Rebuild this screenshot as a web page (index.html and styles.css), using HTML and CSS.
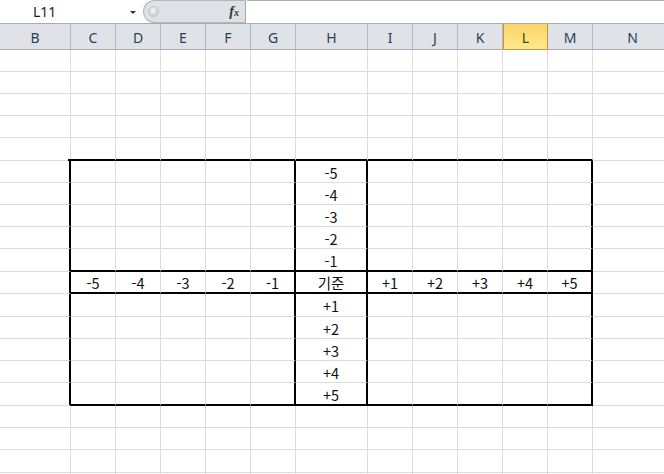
FILE: index.html
```html
<!DOCTYPE html>
<html lang="ko">
<head>
  <meta charset="UTF-8" />
  <meta name="viewport" content="width=device-width, initial-scale=1.0"/>
  <title>Sheet</title>
  <link rel="stylesheet" href="styles.css">
</head>
<body>

  <div class="formula-bar">
    <div class="name-box">
      <span class="cell-ref">L11</span>
      <span class="drop-arrow"></span>
    </div>
    <div class="fx-pill">
      <span class="knob"></span>
      <span class="fx">f<small>x</small></span>
    </div>
    <div class="formula-input"></div>
  </div>

  <div class="sheet" id="sheet"></div>

  <script>
    const cols = ['B','C','D','E','F','G','H','I','J','K','L','M','N'];
    const sheet = document.getElementById('sheet');

    // column headers
    cols.forEach(c => {
      const h = document.createElement('div');
      h.className = 'col-head' + (c === 'L' ? ' selected' : '');
      h.textContent = c;
      sheet.appendChild(h);
    });

    function cellText(r, c) {
      // r: 1-based data row, c: 0-based column (B = 0)
      if (c === 6 && r >= 6 && r <= 10) return String(r - 11);
      if (c === 6 && r === 11) return '기준';
      if (c === 6 && r >= 12 && r <= 16) return '+' + (r - 11);
      if (r === 11 && c >= 1 && c <= 5) return String(c - 6);
      if (r === 11 && c >= 7 && c <= 11) return '+' + (c - 6);
      return '';
    }

    for (let r = 1; r <= 20; r++) {
      for (let c = 0; c < cols.length; c++) {
        const cell = document.createElement('div');
        let cls = 'cell';
        const inTable = r >= 6 && r <= 16;
        if (inTable && (c === 0 || c === 5 || c === 6 || c === 11)) cls += ' thick-right';
        if ((r === 5 || r === 10 || r === 11 || r === 16) && c >= 1 && c <= 11) cls += ' thick-bottom';
        if (r === 5 && c === 0) cls += ' corner';
        cell.className = cls;
        cell.textContent = cellText(r, c);
        sheet.appendChild(cell);
      }
    }
  </script>

</body>
</html>
```

FILE: styles.css
```css
body {
  margin: 0;
  padding: 0;
  background: #fff;
  overflow: hidden;
  font-family: "Noto Sans", "Noto Sans CJK KR", sans-serif;
}

/* formula bar */

.formula-bar {
  display: flex;
  height: 23px;
  border-bottom: 1px solid #a8abb0;
  background: #fff;
}

.name-box {
  width: 143px;
  display: flex;
  align-items: center;
  position: relative;
}

.cell-ref {
  padding-left: 33px;
  font-size: 14px;
  color: #1e1e1e;
}

.drop-arrow {
  position: absolute;
  left: 130px;
  top: 11px;
  width: 0;
  height: 0;
  border-left: 3px solid transparent;
  border-right: 3px solid transparent;
  border-top: 3px solid #333;
}

.fx-pill {
  width: 91px;
  height: 21px;
  background: #dee2e7;
  border: 1px solid #b3b7bd;
  border-right: 1px solid #a5a9ae;
  border-radius: 12px 0 0 12px;
  display: flex;
  align-items: center;
  justify-content: space-between;
  padding: 0 6px 0 4px;
}

.knob {
  width: 9px;
  height: 9px;
  border-radius: 50%;
  background: radial-gradient(circle at 45% 40%, #fafafa, #c9ccd0 70%);
  border: 1px solid #c2c5c9;
}

.fx {
  font-family: "Liberation Serif", serif;
  font-style: italic;
  font-weight: bold;
  font-size: 14px;
  color: #333;
}

.fx small {
  font-size: 10px;
}

.formula-input {
  flex: 1;
  border-top: 1px solid #a8abb0;
  margin-left: 1px;
}

/* grid */

.sheet {
  display: grid;
  grid-template-columns: 71px repeat(5, 45px) 72px repeat(5, 45px) 80px;
  grid-template-rows: 26px 22px 22px 22px 22px 23px 22px 22px 22px 22px 23px 22px 23px 22px 22px 22px 23px 22px 22px 23px 22px;
  font-family: "Noto Sans CJK KR", "Noto Sans", sans-serif;
}

.col-head {
  box-sizing: border-box;
  background: #dfe3e8;
  border-right: 1px solid #b4b9c1;
  border-bottom: 1px solid #a9afb8;
  display: flex;
  align-items: center;
  justify-content: center;
  padding-top: 2px;
  font-family: "Noto Sans", sans-serif;
  font-size: 14px;
  color: #2c3d57;
}

.col-head.selected {
  background: linear-gradient(#f9d36a, #ffe98a);
  border: 1px solid #c4963c;
  border-top: none;
  color: #2f4a26;
}

.cell {
  box-sizing: border-box;
  border-right: 1px solid #dadcdd;
  border-bottom: 1px solid #dadcdd;
  display: flex;
  align-items: center;
  justify-content: center;
  padding-top: 1px;
  font-size: 14.5px;
  color: #111;
}

.thick-right {
  border-right: 2px solid #000;
}

.thick-bottom {
  border-bottom: 2px solid #000;
}

/* fills the table's top-left corner */
.corner {
  position: relative;
}

.corner::after {
  content: "";
  position: absolute;
  right: -1px;
  bottom: -1px;
  width: 3px;
  height: 2px;
  background: #000;
}
```
